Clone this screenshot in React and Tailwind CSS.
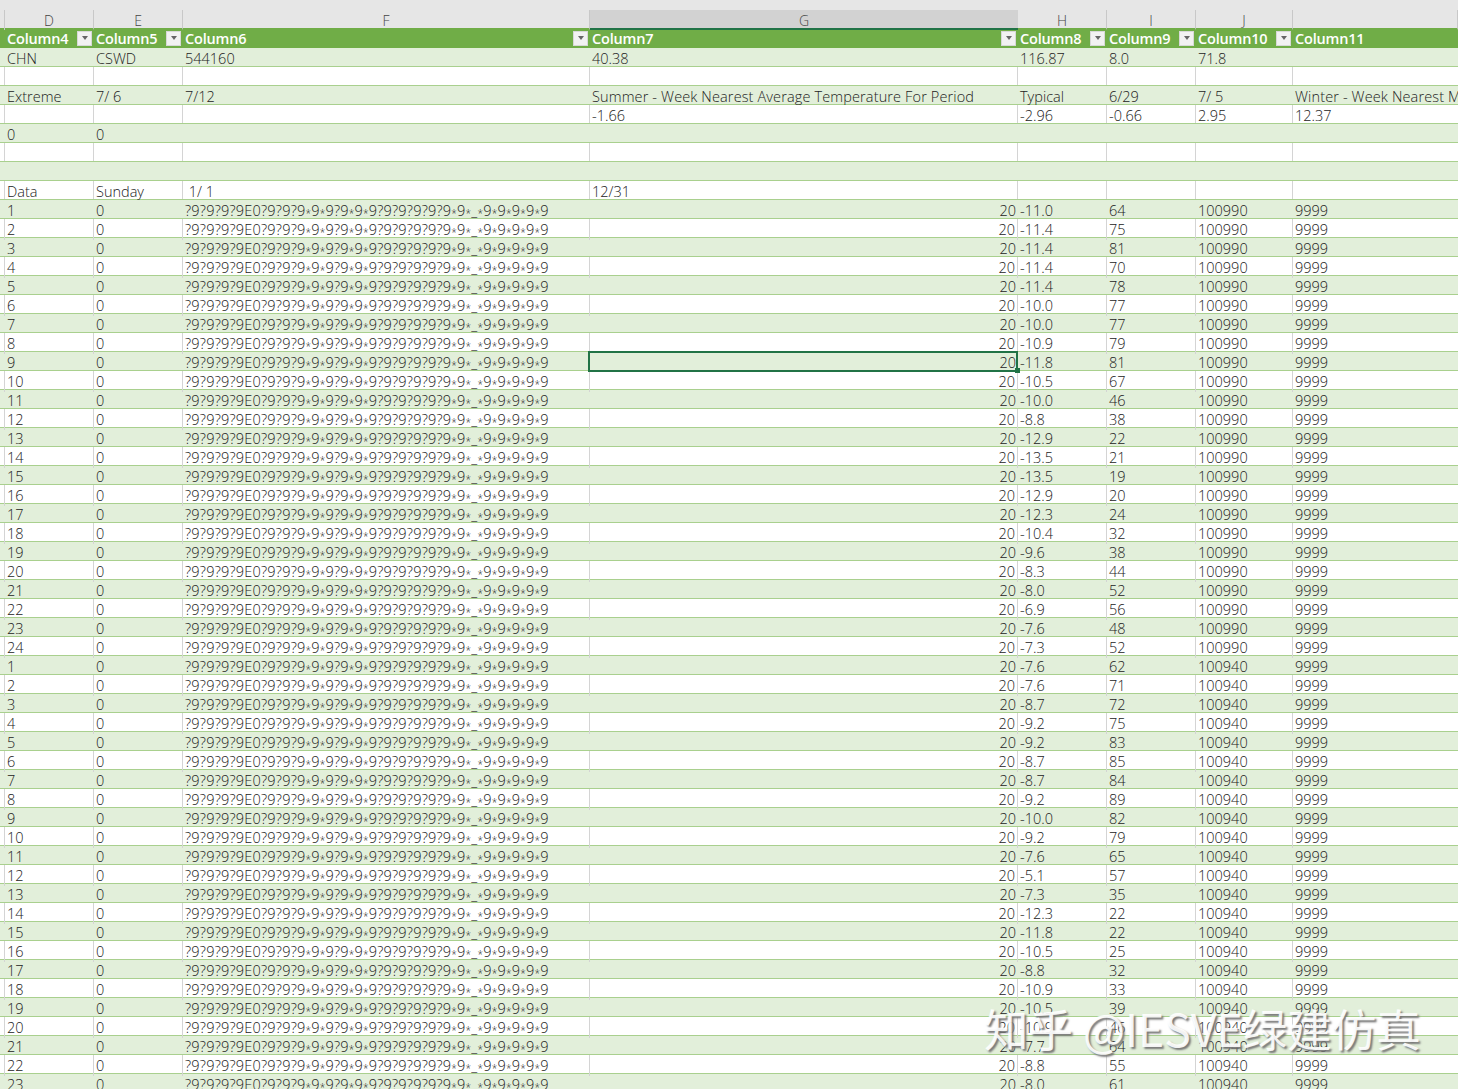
const grid = 'grid grid-cols-[5px_89px_89px_407px_428px_89px_89px_97px_1fr]';
const junk = '?9?9?9?9E0?9?9?9*9*9?9*9*9?9?9?9?9?9*9*_*9*9*9*9*9';

const temps1 = [['-11.0', 64], ['-11.4', 75], ['-11.4', 81], ['-11.4', 70], ['-11.4', 78], ['-10.0', 77], ['-10.0', 77], ['-10.9', 79], ['-11.8', 81], ['-10.5', 67], ['-10.0', 46], ['-8.8', 38], ['-12.9', 22], ['-13.5', 21], ['-13.5', 19], ['-12.9', 20], ['-12.3', 24], ['-10.4', 32], ['-9.6', 38], ['-8.3', 44], ['-8.0', 52], ['-6.9', 56], ['-7.6', 48], ['-7.3', 52]];
const temps2 = [['-7.6', 62], ['-7.6', 71], ['-8.7', 72], ['-9.2', 75], ['-9.2', 83], ['-8.7', 85], ['-8.7', 84], ['-9.2', 89], ['-10.0', 82], ['-9.2', 79], ['-7.6', 65], ['-5.1', 57], ['-7.3', 35], ['-12.3', 22], ['-11.8', 22], ['-10.5', 25], ['-8.8', 32], ['-10.9', 33], ['-10.5', 39], ['-10.9', 46], ['-7.7', 64], ['-8.8', 55], ['-8.0', 61]];

const topRows = [
  ['CHN', 'CSWD', '544160', '40.38', '116.87', '8.0', '71.8', ''],
  ['', '', '', '', '', '', '', ''],
  ['Extreme', '7/ 6', '7/12', 'Summer - Week Nearest Average Temperature For Period', 'Typical', '6/29', '7/ 5', 'Winter - Week Nearest Max'],
  ['', '', '', '-1.66', '-2.96', '-0.66', '2.95', '12.37'],
  ['0', '0', '', '', '', '', '', ''],
  ['', '', '', '', '', '', '', ''],
  ['', '', '', '', '', '', '', ''],
  ['Data', 'Sunday', ' 1/ 1', '12/31', '', '', '', ''],
];

const dataRows = [
  ...temps1.map(([t, rh], i) => [String(i + 1), '0', junk, '20', t, String(rh), '100990', '9999']),
  ...temps2.map(([t, rh], i) => [String(i + 1), '0', junk, '20', t, String(rh), '100940', '9999']),
];

// the stray bytes in column F show small stars at mid height
function Junk() {
  return (
    <span className="tracking-[0.22px]">
      {junk.split('*').map((part, i) => (
        <span key={i}>
          {i > 0 && <span className="text-[10px] align-[-1px]">*</span>}
          {part}
        </span>
      ))}
    </span>
  );
}

function ColumnLetters() {
  const cols = ['D', 'E', 'F', 'G', 'H', 'I', 'J', ''];
  return (
    <div className={`${grid} h-[28px] pt-[10px] bg-[#e6e6e6] text-[14px] leading-[14px] text-[#444]`}>
      <div className="border-r border-[#c8c8c8]" />
      {cols.map((c, i) => (
        <div
          key={i}
          className={`flex items-center justify-center pt-[4px] border-b-2 ${
            c === 'G' ? 'bg-[#d2d2d2] border-b-[#217346]' : 'border-b-transparent border-r border-r-[#c8c8c8]'
          }`}
        >
          {c}
        </div>
      ))}
    </div>
  );
}

function FilterButton() {
  return (
    <span className="w-[15px] h-[15px] bg-[#f2f2f2] border border-[#d8d8d8] flex items-center justify-center">
      <span className="w-0 h-0 border-x-[3px] border-x-transparent border-t-[4px] border-t-[#666]" />
    </span>
  );
}

function TableHeader() {
  const cols = ['Column4', 'Column5', 'Column6', 'Column7', 'Column8', 'Column9', 'Column10', 'Column11'];
  return (
    <div className={`${grid} h-[20px] bg-[#70ad47] text-white font-semibold`}>
      <div />
      {cols.map((c, i) => (
        <div key={c} className="flex items-center justify-between pl-[2px] pr-[2px]">
          <span className="leading-[17px] pt-[1px] tracking-[-0.2px]">{c}</span>
          {i < 7 && <FilterButton />}
        </div>
      ))}
    </div>
  );
}

function Row({ cells, index, numeric }) {
  const green = index % 2 === 0;
  const line = green ? '' : 'border-r border-[#d4d4d4]';
  return (
    <div className={`${grid} h-[19px] border-b border-[#a9d08e] ${green ? 'bg-[#e2efda]' : 'bg-white'}`}>
      <div className={line} />
      {cells.map((c, i) => (
        <div
          key={i}
          className={`${i === 7 ? '' : line} whitespace-pre pt-[3px] leading-[15px] ${
            numeric && i === 3 ? 'text-right pr-[2px]' : 'pl-[2px]'
          } ${c.length > 20 && c !== junk ? 'tracking-[0.13px]' : ''}`}
        >
          {c === junk ? <Junk /> : c}
        </div>
      ))}
    </div>
  );
}

export default function App() {
  return (
    <div className="relative w-[1458px] h-[1089px] overflow-hidden bg-white text-[14.5px] text-[#222] font-['Open_Sans',sans-serif] font-light">
      <ColumnLetters />
      <TableHeader />
      {topRows.map((cells, i) => (
        <Row key={i} cells={cells} index={i} />
      ))}
      {dataRows.map((cells, i) => (
        <Row key={i} cells={cells} index={i + 8} numeric />
      ))}

      {/* active cell */}
      <div className="absolute left-[588px] top-[351px] w-[430px] h-[21px] border-2 border-[#217346]" />
      <div className="absolute left-[1015px] top-[368px] w-[5px] h-[5px] bg-[#217346]" />

      {/* watermark */}
      <div className="absolute left-[984px] top-[998px] whitespace-nowrap text-[44.5px] leading-[60px] text-white/90 font-normal font-['Noto_Sans_CJK_SC','Noto_Sans',sans-serif] [text-shadow:2px_2px_2px_#777]">
        知乎 @IESVE绿建仿真
      </div>
    </div>
  );
}
